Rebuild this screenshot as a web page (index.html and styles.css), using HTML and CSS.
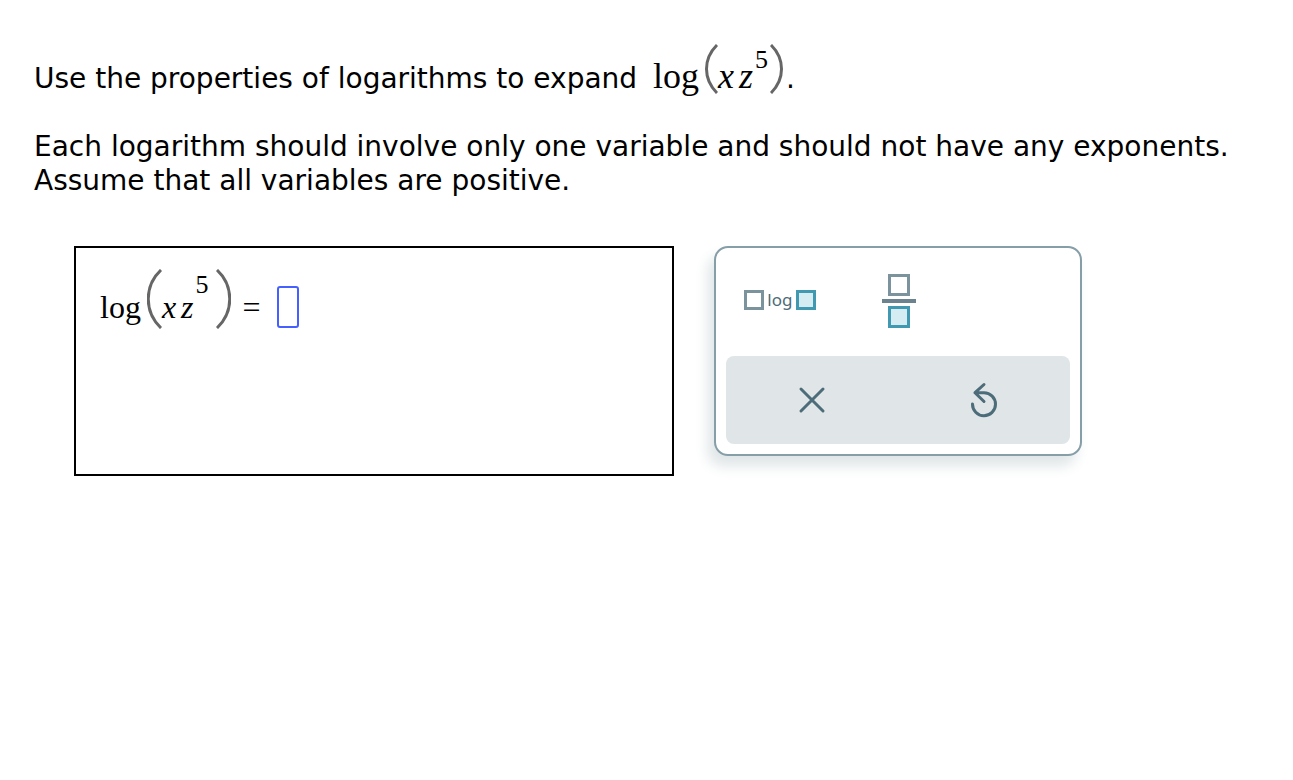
FILE: index.html
```html
<!DOCTYPE html>
<html lang="en">
<head>
<meta charset="utf-8">
<meta name="viewport" content="width=device-width, initial-scale=1">
<title>Expanding logarithms</title>
<link rel="stylesheet" href="styles.css">
</head>
<body>
<main class="question">
  <p class="prompt">Use the properties of logarithms to expand <span class="math math-prompt">log<svg class="paren paren-open" viewBox="0 0 13 50" aria-label="("><path d="M12 1C-2 15-2 35 12 49"/></svg><i>x</i><i class="factor">z</i><sup>5</sup><svg class="paren paren-close" viewBox="0 0 13 50" aria-label=")"><path d="M1 1C15 15 15 35 1 49"/></svg></span>.</p>
  <p class="prompt">Each logarithm should involve only one variable and should not have any exponents.<br>Assume that all variables are positive.</p>
  <div class="workspace">
    <div class="answer">
      <label class="math math-answer" for="expansion">log<svg class="paren paren-open" viewBox="0 0 15 60" aria-label="("><path d="M14 1C-3 17-3 43 14 59"/></svg><i>x</i><i class="factor">z</i><sup>5</sup><svg class="paren paren-close" viewBox="0 0 15 60" aria-label=")"><path d="M1 1C18 17 18 43 1 59"/></svg><span class="equals">=</span></label><input class="blank" id="expansion" type="text">
    </div>
    <div class="palette">
      <div class="keys">
        <button class="key log-key" type="button"><span class="slot"></span><span class="log-name">log</span><span class="slot slot-active"></span></button>
        <button class="key fraction-key" type="button" aria-label="Fraction"><span class="slot slot-large"></span><span class="bar"></span><span class="slot slot-large slot-active"></span></button>
      </div>
      <div class="actions">
        <button class="action" type="button" aria-label="Clear"><svg class="icon" viewBox="0 0 36 36"><path d="M7 7L29 29M29 7L7 29"/></svg></button>
        <button class="action" type="button" aria-label="Undo"><svg class="icon" viewBox="0 0 36 36"><path d="M6.5 22A11.5 11.5 0 1 0 18 10.7H9M18 2.5L9 10.7L18 19.5"/></svg></button>
      </div>
    </div>
  </div>
</main>
</body>
</html>
```
FILE: styles.css
```css
* {
  box-sizing: border-box;
}

body {
  margin: 0;
  background: #fff;
  color: #000;
  font-family: Verdana, "DejaVu Sans", sans-serif;
}

.question {
  padding: 44px 34px;
}

.prompt {
  margin: 0 0 34px;
  font-size: 28px;
  line-height: 34px;
}

.math {
  font-family: "Times New Roman", "Liberation Serif", serif;
  white-space: nowrap;
}

.math-prompt {
  margin: 0 3px 0 7px;
  font-size: 36px;
}

.math-answer {
  font-size: 32px;
}

.math sup {
  margin-left: 2px;
  font-size: 26px;
  line-height: 0;
  vertical-align: 20px;
}

.math-answer sup {
  vertical-align: 25px;
}

.factor {
  margin-left: 5px;
}

.paren {
  width: 13px;
  height: 50px;
  vertical-align: -6px;
  fill: none;
  stroke: #666;
  stroke-width: 3;
}

.math-answer .paren {
  width: 15px;
  height: 60px;
  vertical-align: -11px;
}

.paren-open {
  margin-left: 6px;
}

.paren-close {
  margin-left: 2px;
}

.math-answer .paren-close {
  margin-left: 7px;
}

.equals {
  margin: 0 16px 0 12px;
}

.workspace {
  display: flex;
  align-items: flex-start;
  gap: 40px;
  margin: 48px 0 0 40px;
}

.answer {
  flex: 0 1 600px;
  min-height: 230px;
  padding: 21px 24px;
  border: 2px solid #000;
  line-height: 34px;
}

.blank {
  width: 22px;
  height: 42px;
  padding: 0;
  border: 2px solid #4560ff;
  border-radius: 3px;
  background: #fff;
  font: 28px "Liberation Serif", serif;
  vertical-align: 2px;
}

.palette {
  flex: 0 1 368px;
  padding: 10px;
  border: 2px solid #869ea8;
  border-radius: 14px;
  background: #fff;
  box-shadow: -6px 10px 14px #dfe5e7;
}

.keys {
  display: grid;
  grid-template-columns: repeat(3, 1fr);
  height: 98px;
  padding-bottom: 12px;
}

.key,
.action {
  display: flex;
  align-items: center;
  justify-content: center;
  padding: 0;
  border: 0;
  background: none;
  color: #4c6c79;
  cursor: pointer;
}

.log-key {
  gap: 3px;
  padding: 0 6px 2px 0;
  font: 17px/20px "Noto Sans", sans-serif;
}

.log-name {
  margin-right: 1px;
}

.fraction-key {
  flex-direction: column;
  gap: 3px;
  padding-left: 2px;
}

.slot {
  width: 20px;
  height: 20px;
  border: 3px solid #7b939d;
}

.slot-large {
  width: 22px;
  height: 22px;
}

.slot-active {
  border-color: #4099b0;
  background: #d5edf2;
}

.bar {
  width: 34px;
  height: 4px;
  background: #6a838e;
}

.actions {
  display: grid;
  grid-template-columns: 1fr 1fr;
  height: 88px;
  border-radius: 8px;
  background: #e0e5e8;
}

.icon {
  width: 36px;
  height: 36px;
  fill: none;
  stroke: #4c6c79;
  stroke-width: 3;
  stroke-linecap: round;
  stroke-linejoin: round;
}
```
